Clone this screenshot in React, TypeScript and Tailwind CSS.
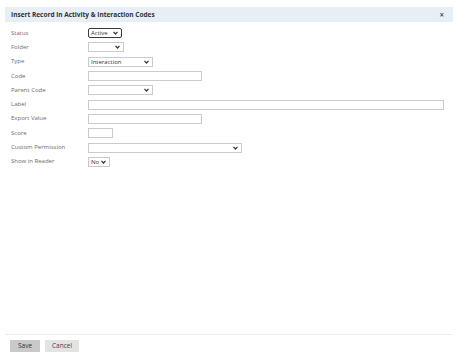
import React from "react";

type Field = {
  label: string;
  kind: "select" | "input";
  width: string;
  value?: string;
  focused?: boolean;
};

const fields: Field[] = [
  { label: "Status", kind: "select", width: "w-[34px]", value: "Active", focused: true },
  { label: "Folder", kind: "select", width: "w-[36px]" },
  { label: "Type", kind: "select", width: "w-[65px]", value: "Interaction" },
  { label: "Code", kind: "input", width: "w-[114px]" },
  { label: "Parent Code", kind: "select", width: "w-[65px]" },
  { label: "Label", kind: "input", width: "w-[356px]" },
  { label: "Export Value", kind: "input", width: "w-[114px]" },
  { label: "Score", kind: "input", width: "w-[25px]" },
  { label: "Custom Permission", kind: "select", width: "w-[154px]" },
  { label: "Show in Reader", kind: "select", width: "w-[22px]", value: "No" },
];

const Chevron = () => (
  <svg width="5" height="4" viewBox="0 0 5 4" className="shrink-0">
    <path d="M0.5 0.8 L2.5 3 L4.5 0.8" fill="none" stroke="#333" strokeWidth="1.2" />
  </svg>
);

const Control = ({ f }: { f: Field }) => {
  if (f.kind === "input") {
    return <div className={`${f.width} h-[10px] border border-[#cbcbcb] bg-white`} />;
  }
  return (
    <div
      className={`${f.width} h-[10px] flex items-center justify-between pl-[2px] pr-[3px] bg-white ${
        f.focused ? "border-[1.5px] border-[#3a3a3a] rounded-[2px]" : "border border-[#cbcbcb]"
      }`}
    >
      <span className="text-[6px] leading-none text-[#333]">{f.value ?? ""}</span>
      <Chevron />
    </div>
  );
};

const App = () => {
  return (
    <div
      className="w-[474px] h-[358px] bg-white flex flex-col overflow-hidden"
      style={{ fontFamily: '"Open Sans", "Liberation Sans", sans-serif' }}
    >
      <div className="flex-1 pt-[7px] px-[5px]">
        <div className="w-[448px] h-[15px] bg-[#e7eef5] flex items-center justify-between pl-[6px] pr-[9px]">
          <span className="text-[6.5px] font-bold text-[#2b323b]">
            Insert Record in Activity &amp; Interaction Codes
          </span>
          <span className="text-[8px] leading-none font-bold text-[#555]">×</span>
        </div>

        <div className="mt-[4px] flex flex-col">
          {fields.map((f) => (
            <div key={f.label} className="h-[14.3px] flex items-center pl-[6px]">
              <span className="w-[77px] text-[6px] text-[#6b6b6b]">{f.label}</span>
              <Control f={f} />
            </div>
          ))}
        </div>
      </div>

      <div className="mx-[5px] w-[448px] border-t border-[#ececec] pt-[5px] pb-[6px] px-[5px] flex gap-[5px]">
        <button className="w-[30px] h-[12px] bg-[#c9c9c9] text-[6.5px] text-[#333] flex items-center justify-center">
          Save
        </button>
        <button className="w-[34px] h-[12px] bg-[#e3e3e3] text-[6.5px] text-[#444] flex items-center justify-center">
          Cancel
        </button>
      </div>
    </div>
  );
};

export default App;
